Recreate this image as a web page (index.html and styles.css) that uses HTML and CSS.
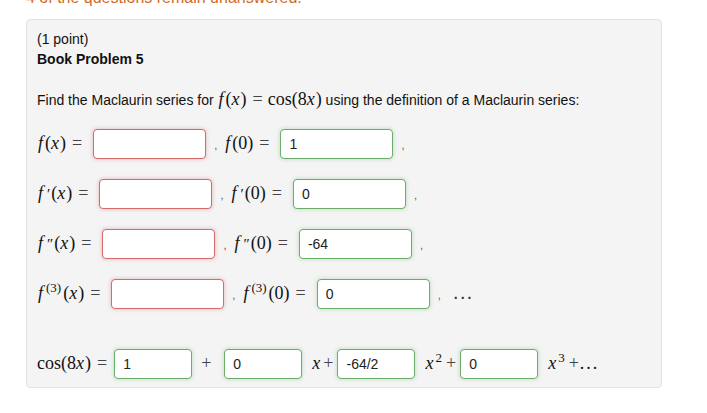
FILE: index.html
```html
<!DOCTYPE html>
<html>
<head>
<meta charset="utf-8">
<link rel="stylesheet" href="styles.css">
</head>
<body>
<div class="notice">4 of the questions remain unanswered.</div>
<div class="panel">
  <div class="pts">(1 point)</div>
  <div class="title">Book Problem 5</div>
  <div class="q">Find the Maclaurin series for <span class="m"><i class="f">f</i>(<i>x</i>)<span class="eq">=</span>cos(8<i>x</i>)</span> using the definition of a Maclaurin series:</div>

  <div class="row">
    <span class="m"><i class="f">f</i>(<i>x</i>)<span class="eq">=</span></span>
    <input class="ans bad" type="text">
    <span class="sep">,</span>
    <span class="m"><i class="f">f</i>(0)<span class="eq">=</span></span>
    <input class="ans good" type="text" value="1">
    <span class="sep">,</span>
  </div>

  <div class="row">
    <span class="m"><i class="f">f</i><span class="pr">′</span>(<i>x</i>)<span class="eq">=</span></span>
    <input class="ans bad" type="text">
    <span class="sep">,</span>
    <span class="m"><i class="f">f</i><span class="pr">′</span>(0)<span class="eq">=</span></span>
    <input class="ans good" type="text" value="0">
    <span class="sep">,</span>
  </div>

  <div class="row">
    <span class="m"><i class="f">f</i><span class="pr">″</span>(<i>x</i>)<span class="eq">=</span></span>
    <input class="ans bad" type="text">
    <span class="sep">,</span>
    <span class="m"><i class="f">f</i><span class="pr">″</span>(0)<span class="eq">=</span></span>
    <input class="ans good" type="text" value="-64">
    <span class="sep">,</span>
  </div>

  <div class="row">
    <span class="m"><i class="f">f</i><sup>(3)</sup>(<i>x</i>)<span class="eq">=</span></span>
    <input class="ans bad" type="text">
    <span class="sep">,</span>
    <span class="m"><i class="f">f</i><sup>(3)</sup>(0)<span class="eq">=</span></span>
    <input class="ans good" type="text" value="0">
    <span class="sep">,</span>
    <span class="dots">...</span>
  </div>

  <div class="row last">
    <span class="m lbl5">cos(8<i>x</i>)<span class="eq">=</span></span>
    <input class="ans good short" type="text" value="1">
    <span class="m plus">+</span>
    <input class="ans good short" type="text" value="0">
    <span class="m term"><i>x</i><span class="op">+</span></span>
    <input class="ans good short" type="text" value="-64/2">
    <span class="m term"><i>x</i><sup>2</sup><span class="op">+</span></span>
    <input class="ans good short" type="text" value="0">
    <span class="m term"><i>x</i><sup>3</sup><span class="op">+</span><span class="ell">...</span></span>
  </div>
</div>
</body>
</html>
```

FILE: styles.css
```css
body {
  margin: 0;
  font-family: "Liberation Sans", Arial, sans-serif;
  font-size: 14px;
  color: #111;
  background: #fff;
}

.notice {
  color: #d2691e;
  font-size: 16px;
  line-height: 20px;
  margin: -12px 0 0 26px;
}

.panel {
  margin: 11px 0 0 26px;
  width: 636px;
  box-sizing: border-box;
  background: #f4f4f4;
  border: 1px solid #e3e3e3;
  border-radius: 4px;
  padding: 9px 10px 8px 10px;
}

.pts, .title { line-height: 20px; }
.title { font-weight: bold; }

.q {
  margin-top: 20px;
  line-height: 20px;
  height: 20px;
}

.m {
  font-family: "Liberation Serif", "Times New Roman", serif;
  font-size: 18px;
  color: #111;
  white-space: nowrap;
}
.m i { font-style: italic; padding-right: 1px; }
.m i.f { padding-left: 1px; padding-right: 2px; }
.m .eq { margin: 0 5px 0 6px; color: #444; }
.m .pr { font-size: 15px; margin: 0 1px 0 2px; }
.m sup { font-size: 13px; line-height: 0; margin: 0 2px 0 1px; }

.row {
  display: flex;
  align-items: baseline;
  margin-top: 20px;
  height: 30px;
}
.row.last { margin-top: 40px; }

.ans {
  box-sizing: border-box;
  width: 113px;
  height: 30px;
  margin: 0 0 0 6px;
  padding: 0 8px;
  font-family: "Liberation Sans", Arial, sans-serif;
  font-size: 14px;
  color: #222;
  background: #fff;
  border-radius: 4px;
  outline: none;
}
.ans.bad {
  border: 1px solid #d46a6a;
  box-shadow: 0 0 4px rgba(200, 60, 60, 0.35);
}
.ans.good {
  border: 1px solid #6aae6a;
  box-shadow: 0 0 4px rgba(80, 160, 80, 0.35);
}
.ans.short { width: 78px; margin-left: 3px; }

.sep {
  font-size: 11px;
  color: #555;
  margin: 0 7px 0 8px;
}

.dots {
  font-family: "Liberation Sans", sans-serif;
  font-size: 14px;
  font-weight: bold;
  letter-spacing: 3px;
  color: #333;
  margin-left: 6px;
}

.lbl5 .eq { margin-right: 4px; }
.plus { margin: 0 10px 0 9px; color: #444; }
.term { margin: 0 0 0 10px; }
.term .op { margin: 0 1px 0 2px; color: #444; }
.term .ell { letter-spacing: 2px; }
```
